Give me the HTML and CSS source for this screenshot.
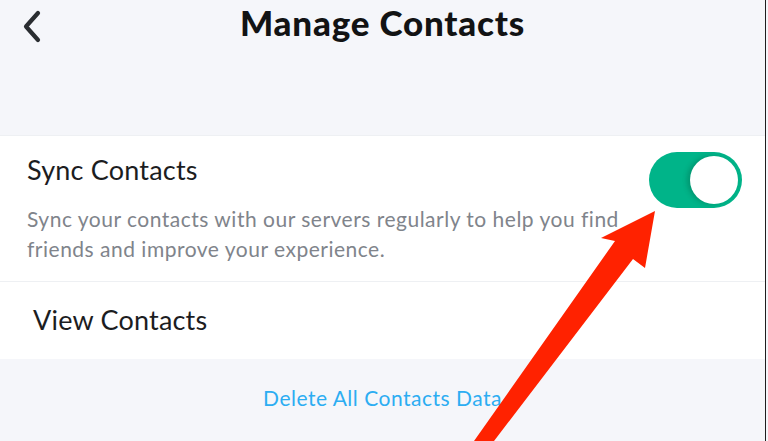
FILE: index.html
```html
<!DOCTYPE html>
<html>
<head>
<meta charset="utf-8">
<link rel="stylesheet" href="styles.css">
</head>
<body>
<div class="screen">
  <header class="topbar">
    <div class="back">
      <svg width="24" height="36" viewBox="0 0 24 36"><path d="M16 10 L4 23.5 L16 37" fill="none" stroke="#2a2d31" stroke-width="4.2" stroke-linecap="round" stroke-linejoin="round" transform="translate(0,-4)"/></svg>
    </div>
    <h1 class="title">Manage Contacts</h1>
    <div class="spacer"></div>
  </header>
  <section class="card">
    <div class="row sync">
      <div class="text">
        <div class="row-title">Sync Contacts</div>
        <p class="desc">Sync your contacts with our servers regularly to help you find<br>friends and improve your experience.</p>
      </div>
      <div class="toggle"><span class="knob"></span></div>
    </div>
    <div class="row view">
      <div class="row-title">View Contacts</div>
    </div>
  </section>
  <div class="footer">
    <span class="link">Delete All Contacts Data</span>
  </div>
  <svg class="arrow" width="765" height="441" viewBox="0 0 765 441">
    <polygon points="655,211 601,238 615,241 474,441 494,441 633,259 645,268" fill="#ff2200"/>
  </svg>
</div>
</body>
</html>
```
FILE: styles.css
```css
html, body {
  margin: 0;
  padding: 0;
  background: #f5f6fa;
  overflow: hidden;
}
body {
  width: 768px;
  height: 441px;
  font-family: Lato, "Noto Sans", sans-serif;
}
.screen {
  position: relative;
  width: 765px;
  height: 441px;
  background: #f5f6fa;
  border-right: 1px solid #1e1e1e;
}
.topbar {
  height: 135px;
  display: grid;
  grid-template-columns: 1fr auto 1fr;
  align-items: start;
}
.back {
  padding: 7px 0 0 22px;
}
.back svg {
  display: block;
}
.title {
  margin: 0;
  font-size: 35px;
  line-height: 44px;
  font-weight: 900;
  color: #121314;
  letter-spacing: 0.8px;
}
.card {
  background: #fff;
  border-top: 1px solid #eef0f3;
}
.row {
  display: flex;
  align-items: flex-start;
}
.sync {
  padding: 18px 23px 17px 27px;
  border-bottom: 1px solid #eef0f3;
}
.text {
  flex: 1;
}
.row-title {
  font-size: 27px;
  line-height: 32px;
  color: #1c1d1f;
  letter-spacing: 0.2px;
}
.desc {
  margin: 18px 0 0;
  font-size: 21px;
  line-height: 30px;
  color: #80848b;
  letter-spacing: 0.5px;
}
.toggle {
  position: relative;
  margin-top: -2px;
  width: 93px;
  height: 56px;
  border-radius: 28px;
  background: #00b489;
}
.knob {
  position: absolute;
  top: 4px;
  right: 4px;
  width: 48px;
  height: 48px;
  border-radius: 50%;
  background: #fff;
  box-shadow: -3px 0 5px rgba(0, 60, 40, 0.25);
}
.view {
  padding: 22px 27px 23px 33px;
}
.footer {
  padding-top: 27px;
  text-align: center;
}
.link {
  font-size: 21px;
  line-height: 24px;
  color: #2cadf2;
  letter-spacing: 0.5px;
}
.arrow {
  position: absolute;
  left: 0;
  top: 0;
  pointer-events: none;
}
```
